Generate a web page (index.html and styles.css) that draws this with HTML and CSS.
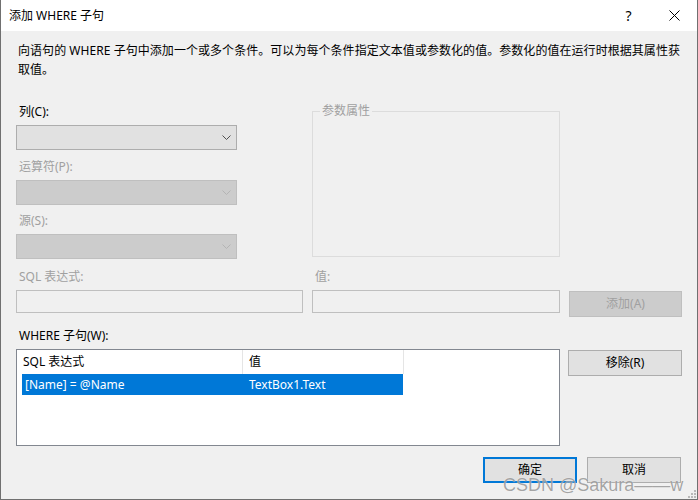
FILE: index.html
```html
<!DOCTYPE html>
<html lang="zh-CN">
<head>
<meta charset="utf-8">
<title>添加 WHERE 子句</title>
<link rel="stylesheet" href="styles.css">
</head>
<body>
<div class="window">
  <div class="titlebar">
    <span class="title">添加 WHERE 子句</span>
    <div class="caption-btns">
      <span class="cap-btn help">?</span>
      <span class="cap-btn close"><svg width="11" height="11" viewBox="0 0 11 11"><path d="M0.5 0.5L10.5 10.5M10.5 0.5L0.5 10.5" stroke="#000" stroke-width="1" fill="none"/></svg></span>
    </div>
  </div>
  <div class="client">
    <p class="desc">向语句的 WHERE 子句中添加一个或多个条件。可以为每个条件指定文本值或参数化的值。参数化的值在运行时根据其属性获<br>取值。</p>
    <div class="top">
      <div class="fields">
        <div class="lbl">列(C):</div>
        <div class="combo"><svg class="chev" width="9" height="5" viewBox="0 0 9 5"><path d="M0.5 0.5L4.5 4.5L8.5 0.5" stroke="#505050" stroke-width="1" fill="none"/></svg></div>
        <div class="lbl dis gap-a">运算符(P):</div>
        <div class="combo disabled"><svg class="chev" width="9" height="5" viewBox="0 0 9 5"><path d="M0.5 0.5L4.5 4.5L8.5 0.5" stroke="#b4b4b4" stroke-width="1" fill="none"/></svg></div>
        <div class="lbl dis gap-b">源(S):</div>
        <div class="combo disabled"><svg class="chev" width="9" height="5" viewBox="0 0 9 5"><path d="M0.5 0.5L4.5 4.5L8.5 0.5" stroke="#b4b4b4" stroke-width="1" fill="none"/></svg></div>
      </div>
      <fieldset class="group">
        <legend>参数属性</legend>
        <div class="group-body"></div>
      </fieldset>
    </div>
    <div class="grid">
      <div class="lbl dis">SQL 表达式:</div>
      <div class="lbl dis">值:</div>
      <div></div>
      <div class="textbox"></div>
      <div class="textbox"></div>
      <div class="btn disabled add">添加(A)</div>
      <div class="lbl where">WHERE 子句(W):</div>
      <div class="list">
        <div class="list-head">
          <div class="hcell c1">SQL 表达式</div>
          <div class="hcell c2">值</div>
        </div>
        <div class="list-row selected">
          <div class="rcell c1">[Name] = @Name</div>
          <div class="rcell c2">TextBox1.Text</div>
        </div>
      </div>
      <div class="btn remove">移除(R)</div>
      <div class="footer">
        <div class="btn default">确定</div>
        <div class="btn">取消</div>
      </div>
    </div>
  </div>
  <div class="watermark">CSDN @Sakura——w</div>
  <svg class="grip" width="8" height="8" viewBox="0 0 8 8">
    <rect x="6" y="0" width="2" height="2" fill="#b8b8b8"/>
    <rect x="3" y="3" width="2" height="2" fill="#b8b8b8"/>
    <rect x="6" y="3" width="2" height="2" fill="#b8b8b8"/>
    <rect x="0" y="6" width="2" height="2" fill="#b8b8b8"/>
    <rect x="3" y="6" width="2" height="2" fill="#b8b8b8"/>
    <rect x="6" y="6" width="2" height="2" fill="#b8b8b8"/>
  </svg>
</div>
</body>
</html>
```

FILE: styles.css
```css
html, body {
  margin: 0;
  padding: 0;
}
body {
  font-family: "Noto Sans", "Noto Sans CJK SC", sans-serif;
  font-size: 12px;
  color: #000;
  background: #f0f0f0;
}
.window {
  position: relative;
  width: 698px;
  height: 500px;
  box-sizing: border-box;
  border-left: 1px solid #707070;
  border-right: 1px solid #707070;
  border-bottom: 1px solid #707070;
  display: flex;
  flex-direction: column;
  overflow: hidden;
}
.titlebar {
  height: 31px;
  flex: none;
  background: #fff;
  display: flex;
  align-items: center;
  padding-left: 8px;
}
.title {
  line-height: 16px;
}
.caption-btns {
  margin-left: auto;
  display: flex;
  height: 31px;
}
.cap-btn {
  width: 46px;
  height: 31px;
  display: flex;
  align-items: center;
  justify-content: center;
}
.help {
  font-size: 14px;
  padding-left: 1px;
  box-sizing: border-box;
}
.close svg {
  display: block;
}
.client {
  flex: 1;
  background: #f0f0f0;
  padding-left: 15px;
}
.desc {
  margin: 0;
  padding: 10px 0 0 2px;
  line-height: 19px;
  white-space: nowrap;
  letter-spacing: 0.05px;
}
.top {
  display: flex;
  align-items: flex-start;
  margin-top: 25px;
}
.fields {
  width: 221px;
  display: flex;
  flex-direction: column;
}
.lbl {
  line-height: 16px;
  padding-left: 3px;
  white-space: nowrap;
}
.lbl.dis {
  color: #a0a0a0;
}
.fields .lbl + .combo {
  margin-top: 5px;
}
.gap-a {
  margin-top: 9px;
}
.gap-b {
  margin-top: 8px;
}
.combo {
  height: 25px;
  box-sizing: border-box;
  background: #e1e1e1;
  border: 1px solid #adadad;
  display: flex;
  align-items: center;
  justify-content: flex-end;
  padding-right: 5px;
}
.combo.disabled {
  background: #cccccc;
  border-color: #bfbfbf;
}
.chev {
  display: block;
}
.group {
  margin: 0 0 0 75px;
  padding: 0;
  width: 248px;
  box-sizing: border-box;
  border: 1px solid #dcdcdc;
  min-width: 0;
}
.group legend {
  margin-left: 7px;
  padding: 0 2px;
  line-height: 14px;
  color: #a0a0a0;
}
.group-body {
  height: 138px;
}
.grid {
  display: grid;
  grid-template-columns: 287px 248px 113px;
  column-gap: 9px;
  margin-top: 10px;
}
.textbox {
  margin-top: 5px;
  height: 23px;
  box-sizing: border-box;
  border: 1px solid #bfbfbf;
  background: #f0f0f0;
}
.btn {
  height: 26px;
  box-sizing: border-box;
  background: #e1e1e1;
  border: 1px solid #adadad;
  display: flex;
  align-items: center;
  justify-content: center;
  line-height: 16px;
  white-space: nowrap;
}
.btn.disabled {
  background: #cccccc;
  border-color: #bfbfbf;
  color: #a0a0a0;
}
.add {
  margin-top: 6px;
}
.where {
  grid-column: 1 / -1;
  margin-top: 11px;
}
.list {
  grid-column: 1 / 3;
  margin-top: 5px;
  height: 97px;
  box-sizing: border-box;
  border: 1px solid #828790;
  background: #fff;
}
.list-head {
  display: flex;
  height: 24px;
}
.hcell {
  box-sizing: border-box;
  line-height: 24px;
  border-right: 1px solid #e5e5e5;
  white-space: nowrap;
}
.hcell.c1 {
  width: 226px;
  padding-left: 6px;
}
.hcell.c2 {
  width: 161px;
  padding-left: 6px;
}
.list-row {
  display: flex;
  margin-left: 5px;
  width: 381px;
  height: 21px;
}
.list-row.selected {
  background: #0078d7;
  color: #fff;
}
.rcell {
  line-height: 21px;
  white-space: nowrap;
  box-sizing: border-box;
}
.rcell.c1 {
  width: 221px;
  padding-left: 3px;
}
.rcell.c2 {
  padding-left: 6px;
}
.remove {
  align-self: start;
  margin-top: 6px;
  margin-left: -1px;
}
.footer {
  grid-column: 1 / -1;
  display: flex;
  justify-content: flex-end;
  gap: 10px;
  margin-top: 11px;
  margin-right: 1px;
}
.footer .btn {
  width: 94px;
}
.btn.default {
  border: 2px solid #0078d7;
}
.watermark {
  position: absolute;
  left: 502px;
  top: 476px;
  font-family: "Liberation Sans", Arial, sans-serif;
  font-size: 18px;
  line-height: 18px;
  color: rgba(105, 105, 105, 0.6);
  text-shadow: 0 0 1px rgba(255, 255, 255, 0.9);
  white-space: nowrap;
}
.grip {
  position: absolute;
  right: 1px;
  bottom: 1px;
}
```
